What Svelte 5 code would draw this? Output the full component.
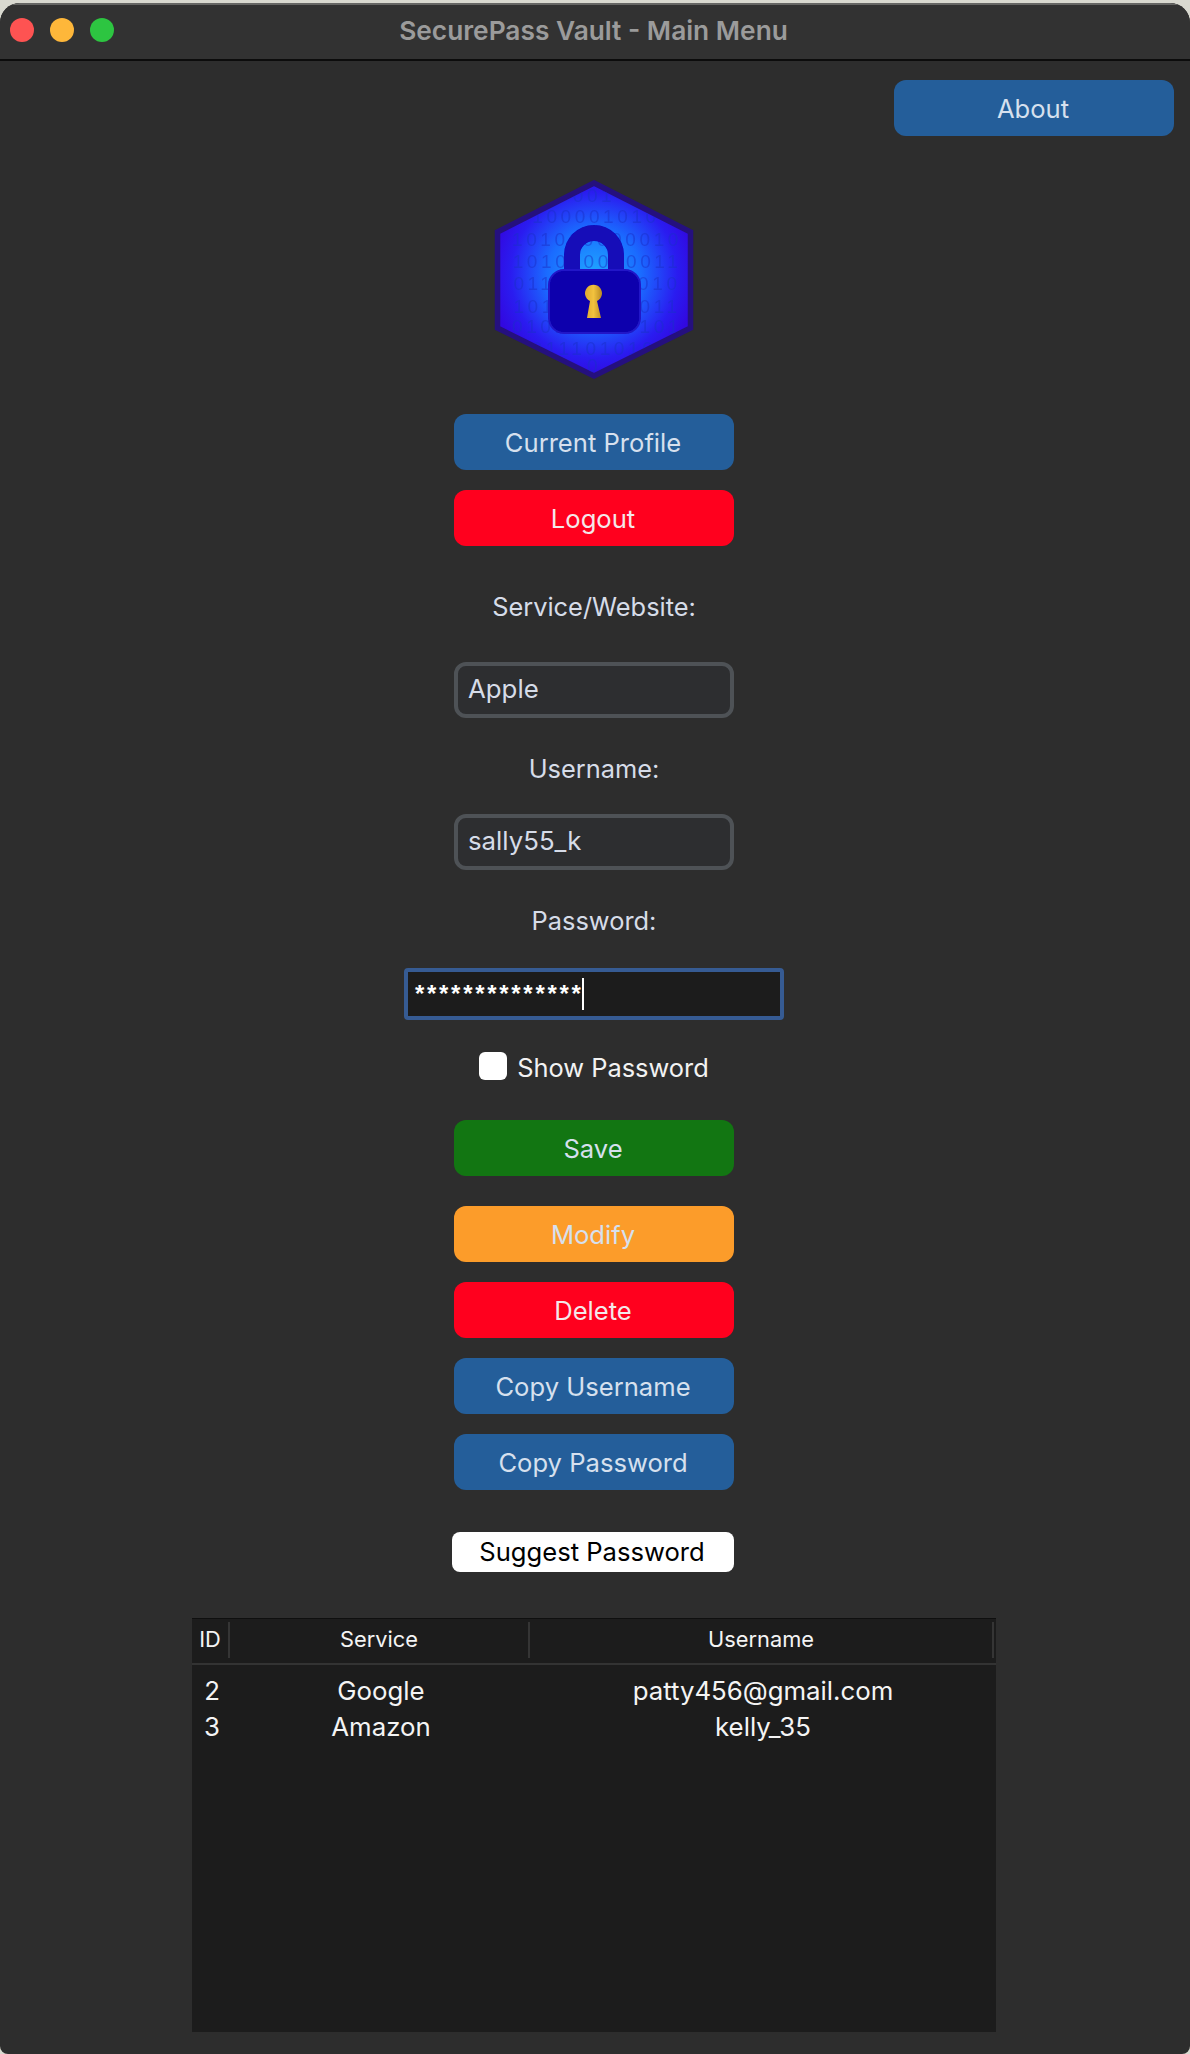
<script>
  const binary = [
    [594, 202, '001'],
    [596, 223, '100001010'],
    [597, 246, '101010000010'],
    [597, 268, '101010000011'],
    [597, 290, '011100000010'],
    [597, 313, '101100000011'],
    [597, 333, '010100000101'],
    [594, 355, '011101010'],
    [594, 372, '0']
  ];
  const rows = [
    { id: 2, service: 'Google', username: 'patty456@gmail.com' },
    { id: 3, service: 'Amazon', username: 'kelly_35' }
  ];
</script>

<div class="desk">
  <div class="window">
    <header class="titlebar">
      <div class="lights">
        <span class="light red"></span>
        <span class="light yellow"></span>
        <span class="light green"></span>
      </div>
      <div class="title">SecurePass Vault - Main Menu</div>
    </header>

    <main class="content">
      <div class="top-row"><button class="btn blue">About</button></div>

      <svg class="logo" viewBox="494 180 200 200" width="200" height="200" aria-label="SecurePass logo">
        <defs>
          <radialGradient id="hexfill" cx="594" cy="275" r="104" gradientUnits="userSpaceOnUse">
            <stop offset="0" stop-color="#1fa8ff" />
            <stop offset="0.45" stop-color="#1a6cff" />
            <stop offset="0.8" stop-color="#2a1cf0" />
            <stop offset="1" stop-color="#3208e0" />
          </radialGradient>
          <linearGradient id="keyfill" x1="0" y1="0" x2="1" y2="0">
            <stop offset="0" stop-color="#e0a92f" />
            <stop offset="0.5" stop-color="#f2c23e" />
            <stop offset="1" stop-color="#b98a24" />
          </linearGradient>
          <filter id="soft" x="-40%" y="-40%" width="180%" height="180%"><feGaussianBlur stdDeviation="0.7" /></filter>
          <clipPath id="hexclip"><polygon points="594,186 688,234 688,326 594,373 500,326 500,234" /></clipPath>
        </defs>
        <polygon points="594,183 690.5,232 690.5,328 594,376 497.5,328 497.5,232" fill="url(#hexfill)" stroke="#25107e" stroke-width="5.5" stroke-linejoin="miter" />
        <g clip-path="url(#hexclip)">
          {#each binary as b}
            <text class="bits" x={b[0]} y={b[1]} text-anchor="middle">{b[2]}</text>
          {/each}
        </g>
        <path d="M572 274 v-19 a22 22 0 0 1 44 0 v19" fill="none" stroke="#1208b8" stroke-width="16" filter="url(#soft)" />
        <rect x="549" y="270" width="91" height="63" rx="15" fill="#0d00ad" stroke="#2018c8" stroke-width="2" filter="url(#soft)" />
        <path d="M590 301 a8.5 8.5 0 1 1 7 0 l4 17 h-14 z" fill="url(#keyfill)" filter="url(#soft)" />
      </svg>

      <button class="btn blue profile">Current Profile</button>
      <button class="btn danger gap20">Logout</button>

      <div class="label service-label">Service/Website:</div>
      <input class="field apple" value="Apple" readonly />
      <div class="label user-label">Username:</div>
      <input class="field sally" value="sally55_k" readonly />
      <div class="label pass-label">Password:</div>
      <div class="pass-field"><span class="stars">**************</span><span class="caret"></span></div>

      <label class="show"><input type="checkbox" /><span>Show Password</span></label>

      <button class="btn save">Save</button>
      <button class="btn modify">Modify</button>
      <button class="btn danger gap20">Delete</button>
      <button class="btn blue gap20">Copy Username</button>
      <button class="btn blue gap20">Copy Password</button>
      <button class="suggest">Suggest Password</button>

      <section class="table">
        <div class="thead">
          <div class="th">ID</div>
          <div class="th">Service</div>
          <div class="th">Username</div>
        </div>
        <div class="tbody">
          {#each rows as r}
            <div class="tr">
              <div>{r.id}</div>
              <div>{r.service}</div>
              <div>{r.username}</div>
            </div>
          {/each}
        </div>
      </section>
    </main>
  </div>
</div>

<style>
  :global(body) {
    margin: 0;
    background: #d9d9d0;
  }
  .desk {
    width: 1190px;
    height: 2054px;
    padding-top: 3px;
    box-sizing: border-box;
    overflow: hidden;
    font-family: Inter, "Liberation Sans", sans-serif;
  }
  .window {
    height: 2051px;
    background: #2d2d2d;
    border-radius: 20px 20px 8px 8px;
    overflow: hidden;
  }
  .titlebar {
    height: 58px;
    box-sizing: border-box;
    background: #323232;
    border-top: 2px solid #666664;
    border-bottom: 2px solid #0c0c0c;
    display: flex;
    align-items: center;
    justify-content: center;
    position: relative;
  }
  .lights {
    position: absolute;
    left: 10px;
    top: 13px;
    display: flex;
    gap: 16px;
  }
  .light {
    width: 24px;
    height: 24px;
    border-radius: 50%;
  }
  .light.red { background: #fe5352; }
  .light.yellow { background: #feb73a; }
  .light.green { background: #2dc541; }
  .title {
    color: #9b9b9b;
    font-weight: 600;
    font-size: 26.3px;
    margin-left: -3px;
    margin-top: -4px;
  }
  .content {
    display: flex;
    flex-direction: column;
    align-items: center;
    padding-right: 2px;
  }
  .top-row {
    width: 100%;
    display: flex;
    justify-content: flex-end;
    padding: 19px 14px 0 0;
    box-sizing: border-box;
  }
  .btn {
    width: 280px;
    height: 56px;
    flex: none;
    border: 0;
    border-radius: 12px;
    font: 400 25.6px Inter, "Liberation Sans", sans-serif;
    color: #d6e0ee;
    padding: 1px 2px 0 0;
  }
  .blue { background: #245e9a; }
  .danger { background: #ff001e; color: #f4e8ea; }
  .gap20 { margin-top: 20px; }
  .logo {
    display: block;
    margin-top: 44px;
    flex: none;
  }
  .bits {
    font-family: "Liberation Sans", sans-serif;
    font-size: 19px;
    letter-spacing: 3.6px;
    fill: #1a30c8;
    opacity: 0.5;
  }
  .profile { margin-top: 34px; }
  .label {
    color: #d6dce8;
    font-size: 25.4px;
    line-height: 30px;
    height: 30px;
  }
  .service-label { margin-top: 46px; }
  .user-label { margin-top: 36px; }
  .pass-label { margin-top: 36px; }
  .field {
    display: block;
    box-sizing: border-box;
    width: 280px;
    height: 56px;
    flex: none;
    border: 4px solid #4e5256;
    border-radius: 12px;
    background: #2d2e30;
    color: #d6dce8;
    font: 400 25.8px Inter, "Liberation Sans", sans-serif;
    padding: 0 0 4px 10px;
    outline: none;
  }
  .apple { margin-top: 40px; }
  .sally { margin-top: 30px; }
  .pass-field {
    box-sizing: border-box;
    width: 380px;
    height: 52px;
    flex: none;
    margin-top: 32px;
    border: 4px solid #365b93;
    border-radius: 4px;
    background: #1c1c1c;
    padding-left: 7px;
    display: flex;
    align-items: center;
    color: #fff;
  }
  .stars {
    font: 700 24px "Liberation Sans", sans-serif;
    letter-spacing: 2.7px;
  }
  .caret {
    width: 2px;
    height: 32px;
    background: #fff;
    margin-left: -2px;
  }
  .show {
    display: flex;
    align-items: center;
    gap: 10px;
    margin-top: 32px;
    height: 28px;
    color: #f2f2f2;
    font-size: 25.4px;
  }
  .show span { padding-top: 2px; }
  .show input {
    appearance: none;
    width: 28px;
    height: 28px;
    margin: 0;
    background: #fff;
    border-radius: 6px;
  }
  .save { background: #127612; margin-top: 40px; }
  .modify { background: #fc9c2a; margin-top: 30px; }
  .suggest {
    width: 282px;
    height: 40px;
    flex: none;
    margin-top: 42px;
    margin-left: -2px;
    border: 0;
    border-radius: 8px;
    background: #fff;
    color: #000;
    padding: 0 2px 2px 0;
    font: 400 25.6px Inter, "Liberation Sans", sans-serif;
  }
  .table {
    width: 804px;
    height: 414px;
    flex: none;
    margin-top: 46px;
    background: #1c1c1c;
    color: #f4f4f4;
    display: flex;
    flex-direction: column;
  }
  .thead {
    height: 47px;
    box-sizing: border-box;
    border-top: 1px solid #0f0f0f;
    border-bottom: 2px solid #333;
    padding-top: 3px;
    display: grid;
    grid-template-columns: 38px 300px 464px;
    align-items: start;
  }
  .th {
    height: 36px;
    line-height: 34px;
    text-align: center;
    font-size: 21.8px;
    border-right: 2px solid #353535;
    box-sizing: border-box;
  }
  .tbody { padding-top: 8px; }
  .tr {
    display: grid;
    grid-template-columns: 38px 300px 464px;
    height: 36px;
    line-height: 36px;
    text-align: center;
    font-size: 25.8px;
  }
  .tr div { padding-left: 2px; }
</style>
